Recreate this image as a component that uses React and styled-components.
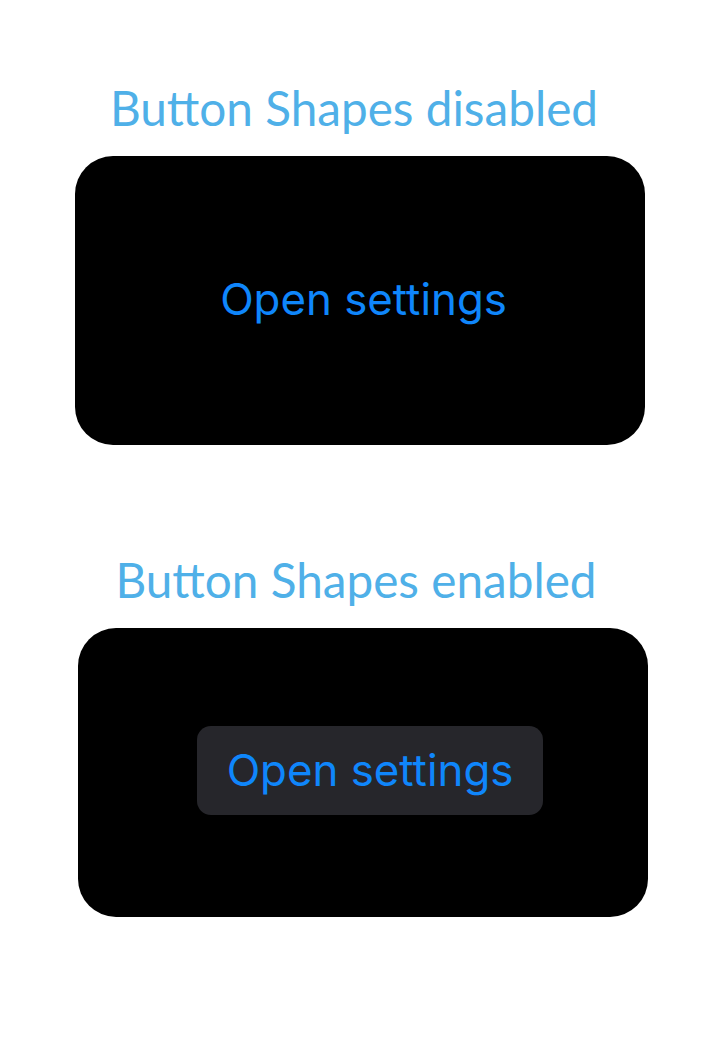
import React from 'react';
import styled, { createGlobalStyle } from 'styled-components';

const GlobalStyle = createGlobalStyle`
  html, body {
    margin: 0;
    padding: 0;
    background: #fff;
  }
`;

const Page = styled.div`
  display: flex;
  flex-direction: column;
  align-items: center;
  padding: 80px 0 0 6px;
  gap: 107px;
`;

const Section = styled.section`
  display: flex;
  flex-direction: column;
  align-items: center;
  gap: 20px;
  padding-left: ${(p) => p.indent || 0}px;
`;

const Title = styled.h2`
  margin: 0 ${(p) => p.nudge || 0}px 0 0;
  font-family: Lato, 'Open Sans', sans-serif;
  font-weight: 400;
  font-size: 47.7px;
  line-height: 56px;
  color: #4fb0e8;
`;

const Card = styled.div`
  box-sizing: border-box;
  width: 570px;
  height: 289px;
  padding: ${(p) => p.pad};
  border-radius: 38px;
  background: #000;
  display: flex;
  align-items: center;
  justify-content: center;
`;

const SettingsButton = styled.button`
  border: none;
  cursor: pointer;
  font-family: Inter, Roboto, sans-serif;
  font-weight: 400;
  font-size: 43.8px;
  color: #0f86fb;
  background: ${(p) => (p.shaped ? '#26262b' : 'transparent')};
  border-radius: 14px;
  width: ${(p) => (p.shaped ? '346px' : 'auto')};
  height: 89px;
  padding: 0;
  display: flex;
  align-items: center;
  justify-content: center;
`;

const App = () => {
  return (
    <>
      <GlobalStyle />
      <Page>
        <Section>
          <Title nudge={12}>Button Shapes disabled</Title>
          <Card pad="0 0 2px 7px">
            <SettingsButton>Open settings</SettingsButton>
          </Card>
        </Section>
        <Section indent={6}>
          <Title nudge={14}>Button Shapes enabled</Title>
          <Card pad="0 0 4px 14px">
            <SettingsButton shaped>Open settings</SettingsButton>
          </Card>
        </Section>
      </Page>
    </>
  );
};

export default App;
